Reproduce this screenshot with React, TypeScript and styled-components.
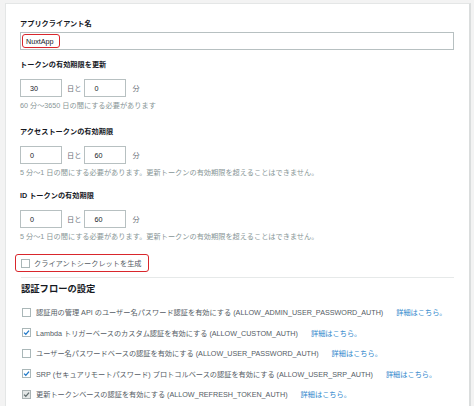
import React from "react";
import styled, { createGlobalStyle } from "styled-components";

const Global = createGlobalStyle`
  html, body { margin: 0; padding: 0; background: #f3f3f3; }
  body { font-family: "Liberation Sans", "Noto Sans CJK JP", sans-serif; }
  #root { height: 406px; overflow: hidden; }
`;

const Card = styled.div`
  margin: 3px 3px 0 5px;
  height: 403px;
  box-sizing: border-box;
  background: #fff;
  border: 1px solid #e4e6e6;
  border-right: 2px solid #dadddd;
  border-bottom: none;
  padding: 14px 15px 0 14px;
  display: flex;
  flex-direction: column;
  color: #545b64;
  font-size: 7.2px;
`;

const Field = styled.div<{ $top?: number }>`
  display: flex;
  flex-direction: column;
  margin-top: ${(p) => p.$top ?? 0}px;
`;

const Label = styled.div`
  font-weight: bold;
  color: #16191f;
  font-size: 7.2px;
  line-height: 12px;
  height: 12px;
`;

const WideInput = styled.div`
  margin-top: 2px;
  height: 18px;
  box-sizing: border-box;
  border: 1px solid #b7c0c1;
  display: flex;
  align-items: center;
  padding-left: 1px;
`;

const Mark = styled.span`
  display: inline-flex;
  align-items: center;
  border: 1.5px solid #d9262c;
  border-radius: 3px;
  height: 14px;
  box-sizing: border-box;
  padding: 0 5px 0 3px;
  color: #16191f;
  font-size: 7.2px;
`;

const DurationRow = styled.div`
  margin-top: 8px;
  display: flex;
  align-items: center;
  height: 18px;
`;

const Box = styled.div`
  width: 42px;
  height: 18px;
  box-sizing: border-box;
  border: 1px solid #b7c0c1;
  display: flex;
  align-items: center;
  padding-left: 9px;
  color: #16191f;
  font-size: 7.2px;
`;

const Unit = styled.span<{ $l: number; $r?: number }>`
  margin-left: ${(p) => p.$l}px;
  margin-right: ${(p) => p.$r ?? 0}px;
  color: #687078;
  font-size: 7.2px;
`;

const Hint = styled.div`
  margin-top: 3px;
  line-height: 12px;
  color: #879596;
  font-size: 7.2px;
`;

const SecretWrap = styled.div`
  margin-top: 11px;
  margin-left: -5px;
  align-self: flex-start;
  height: 18px;
  box-sizing: border-box;
  border: 1.5px solid #d9262c;
  border-radius: 3px;
  display: flex;
  align-items: center;
  padding: 0 6px 0 5px;
  gap: 4px;
  color: #545b64;
`;

const Divider = styled.div`
  margin-top: 5px;
  margin-left: 1px;
  height: 1px;
  background: #e6e9e9;
`;

const Heading = styled.div`
  margin-top: 5px;
  font-weight: bold;
  font-size: 9.3px;
  line-height: 12px;
  color: #16191f;
  padding-left: 1px;
`;

const FlowList = styled.div`
  margin-top: 11px;
  display: flex;
  flex-direction: column;
  gap: 8px;
  padding-left: 2px;
`;

const FlowRow = styled.div`
  display: flex;
  align-items: center;
  height: 12.5px;
  gap: 5px;
  color: #545b64;
  white-space: nowrap;
`;

const Link = styled.span`
  margin-left: 8px;
  color: #2f87cc;
`;

const CheckBox = styled.span<{ $state: "off" | "on" | "disabled" }>`
  width: 9px;
  height: 9px;
  box-sizing: border-box;
  flex: none;
  border: 1px solid ${(p) => (p.$state === "disabled" ? "#a9b2b3" : "#aab7b8")};
  background: ${(p) => (p.$state === "disabled" ? "#e3e6e6" : "#fff")};
  display: inline-flex;
  align-items: center;
  justify-content: center;
`;

const Check = ({ state }: { state: "off" | "on" | "disabled" }) => (
  <CheckBox $state={state}>
    {state !== "off" && (
      <svg width="7" height="7" viewBox="0 0 10 10">
        <path
          d="M1.5 5.2 L4 7.6 L8.6 2.4"
          fill="none"
          stroke={state === "on" ? "#1f78c8" : "#5f6b6d"}
          strokeWidth="1.9"
        />
      </svg>
    )}
  </CheckBox>
);

type Duration = { label: string; a: string; b: string; hint: string; top: number };

const durations: Duration[] = [
  { label: "トークンの有効期限を更新", a: "30", b: "0", hint: "60 分〜3650 日の間にする必要があります", top: 9 },
  {
    label: "アクセストークンの有効期限",
    a: "0",
    b: "60",
    hint: "5 分〜1 日の間にする必要があります。更新トークンの有効期限を超えることはできません。",
    top: 14,
  },
  {
    label: "ID トークンの有効期限",
    a: "0",
    b: "60",
    hint: "5 分〜1 日の間にする必要があります。更新トークンの有効期限を超えることはできません。",
    top: 11,
  },
];

const flows: { text: string; state: "off" | "on" | "disabled" }[] = [
  { text: "認証用の管理 API のユーザー名パスワード認証を有効にする (ALLOW_ADMIN_USER_PASSWORD_AUTH)", state: "off" },
  { text: "Lambda トリガーベースのカスタム認証を有効にする (ALLOW_CUSTOM_AUTH)", state: "on" },
  { text: "ユーザー名パスワードベースの認証を有効にする (ALLOW_USER_PASSWORD_AUTH)", state: "off" },
  { text: "SRP (セキュアリモートパスワード) プロトコルベースの認証を有効にする (ALLOW_USER_SRP_AUTH)", state: "on" },
  { text: "更新トークンベースの認証を有効にする (ALLOW_REFRESH_TOKEN_AUTH)", state: "disabled" },
];

export default function App() {
  return (
    <>
      <Global />
      <Card>
        <Field>
          <Label>アプリクライアント名</Label>
          <WideInput>
            <Mark>NuxtApp</Mark>
          </WideInput>
        </Field>
        {durations.map((d) => (
          <Field key={d.label} $top={d.top}>
            <Label>{d.label}</Label>
            <DurationRow>
              <Box>{d.a}</Box>
              <Unit $l={5} $r={3}>日と</Unit>
              <Box>{d.b}</Box>
              <Unit $l={6}>分</Unit>
            </DurationRow>
            <Hint>{d.hint}</Hint>
          </Field>
        ))}
        <SecretWrap>
          <Check state="off" />
          <span>クライアントシークレットを生成</span>
        </SecretWrap>
        <Divider />
        <Heading>認証フローの設定</Heading>
        <FlowList>
          {flows.map((f) => (
            <FlowRow key={f.text}>
              <Check state={f.state} />
              <span>{f.text}</span>
              <Link>詳細はこちら。</Link>
            </FlowRow>
          ))}
        </FlowList>
      </Card>
    </>
  );
}
